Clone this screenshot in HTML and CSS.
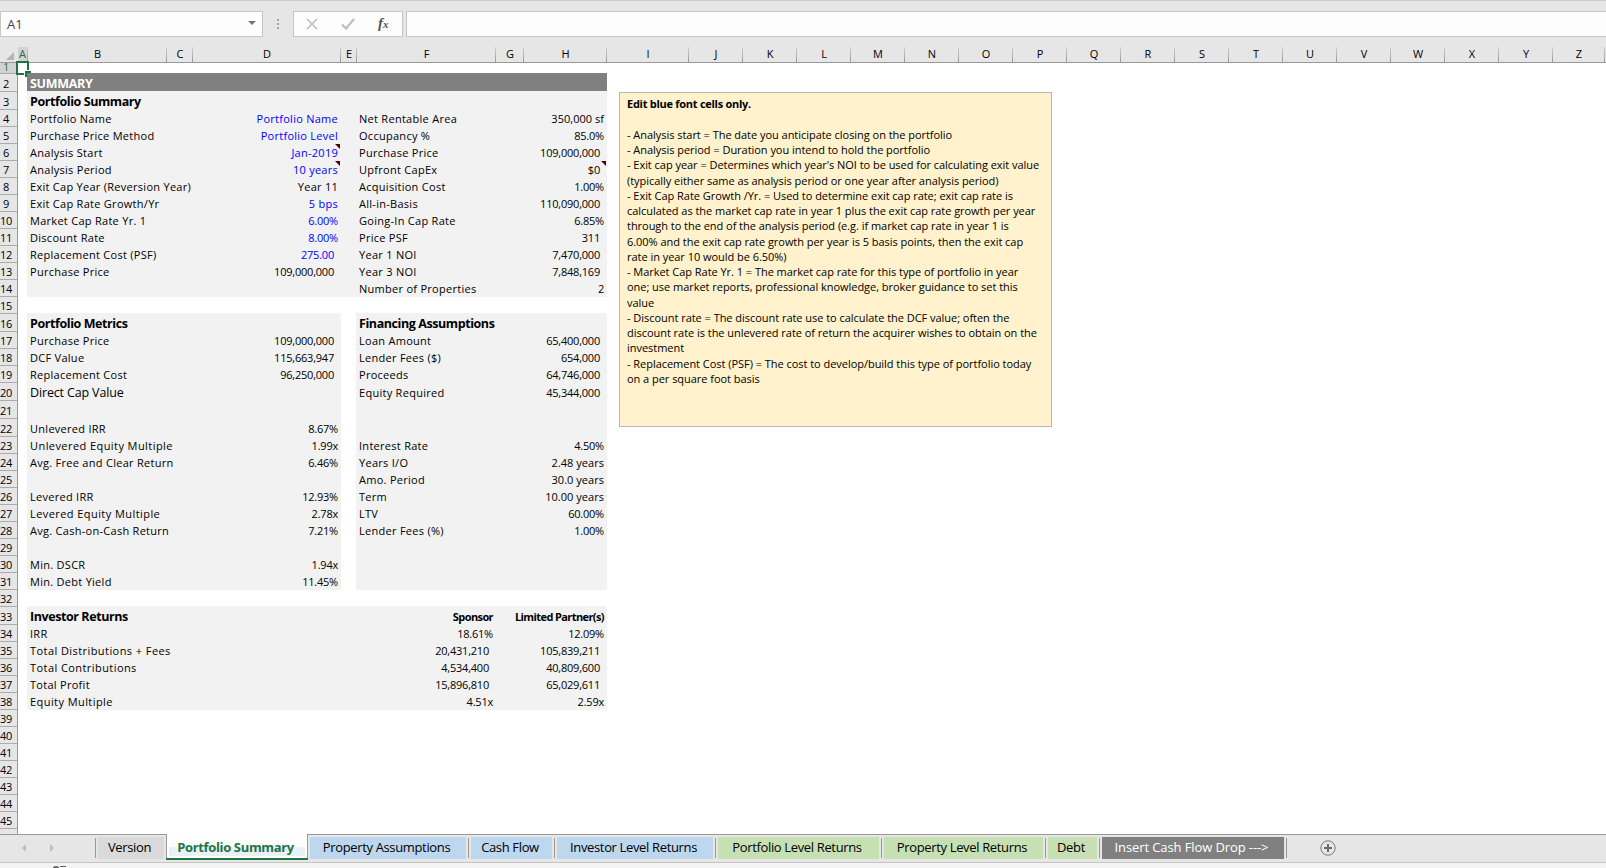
FILE: index.html
```
<!DOCTYPE html>
<html lang="en">
	<head>
		<meta charset="UTF-8" />
		<meta name="viewport" content="width=device-width, initial-scale=1.0" />
		<title>Portfolio Summary</title>
		<link rel="stylesheet" href="styles.css">
	</head>

	<body>
		<header class="formula-bar">
			<div class="name-box">
				<span>A1</span>
				<svg width="8" height="4" viewBox="0 0 8 4"><path d="M0 0h8L4 4z" fill="#777" /></svg>
			</div>
			<svg class="grip" width="3" height="11" viewBox="0 0 3 11"><path d="M0 0h2v2H0zM0 4h2v2H0zM0 8h2v2H0z" fill="#a6a6a6" /></svg>
			<div class="actions">
				<svg width="12" height="12" viewBox="0 0 12 12"><path d="M1 1l10 10M11 1L1 11" stroke="#bdbdbd" stroke-width="1.6" fill="none" /></svg>
				<svg width="14" height="12" viewBox="0 0 14 12"><path d="M1 6.5l4 4L13 1" stroke="#bdbdbd" stroke-width="2.2" fill="none" /></svg>
				<span class="fx">f<small>x</small></span>
			</div>
			<div class="formula"></div>
		</header>

		<main class="sheet">
			<table>
				<colgroup>
					<col class="c-num"><col class="c-a"><col class="c-b"><col class="c-c"><col class="c-d"><col class="c-e"><col class="c-f"><col class="c-g"><col class="c-h"><col class="c-i">
					<col span="16" class="c-std"><col class="c-z"><col>
				</colgroup>
				<thead>
					<tr>
						<th class="corner"><svg width="8" height="8" viewBox="0 0 8 8"><path d="M8 0v8H0z" fill="#b4b4b4" /></svg></th>
						<th class="active">A</th><th>B</th><th>C</th><th>D</th><th>E</th><th>F</th><th>G</th><th>H</th><th>I</th>
						<th>J</th><th>K</th><th>L</th><th>M</th><th>N</th><th>O</th><th>P</th><th>Q</th><th>R</th>
						<th>S</th><th>T</th><th>U</th><th>V</th><th>W</th><th>X</th><th>Y</th><th>Z</th><th></th>
					</tr>
				</thead>
				<tbody>
					<tr class="first"><th class="active"><div>1</div></th><td><div class="cursor"></div></td></tr>
					<tr class="tall"><th>2</th><td></td><td class="banner" colspan="7">SUMMARY</td></tr>

					<tr class="tall"><th>3</th><td></td><td class="fill title" colspan="7">Portfolio Summary</td></tr>
					<tr><th>4</th><td></td><td class="fill" colspan="2">Portfolio Name</td><td class="fill val input text">Portfolio Name</td><td class="fill"></td><td class="fill" colspan="2">Net Rentable Area</td><td class="fill val unit">350,000 sf</td></tr>
					<tr><th>5</th><td></td><td class="fill" colspan="2">Purchase Price Method</td><td class="fill val input text">Portfolio Level</td><td class="fill"></td><td class="fill" colspan="2">Occupancy %</td><td class="fill val">85.0%</td></tr>
					<tr><th>6</th><td></td><td class="fill" colspan="2">Analysis Start</td><td class="fill val input note text">Jan-2019</td><td class="fill"></td><td class="fill" colspan="2">Purchase Price</td><td class="fill val acct">109,000,000</td></tr>
					<tr><th>7</th><td></td><td class="fill" colspan="2">Analysis Period</td><td class="fill val input note text">10 years</td><td class="fill"></td><td class="fill" colspan="2">Upfront CapEx</td><td class="fill val acct note">$0</td></tr>
					<tr><th>8</th><td></td><td class="fill" colspan="2">Exit Cap Year (Reversion Year)</td><td class="fill val text">Year 11</td><td class="fill"></td><td class="fill" colspan="2">Acquisition Cost</td><td class="fill val">1.00%</td></tr>
					<tr><th>9</th><td></td><td class="fill" colspan="2">Exit Cap Rate Growth/Yr</td><td class="fill val input text">5 bps</td><td class="fill"></td><td class="fill" colspan="2">All-in-Basis</td><td class="fill val acct">110,090,000</td></tr>
					<tr><th>10</th><td></td><td class="fill" colspan="2">Market Cap Rate Yr. 1</td><td class="fill val input">6.00%</td><td class="fill"></td><td class="fill" colspan="2">Going-In Cap Rate</td><td class="fill val">6.85%</td></tr>
					<tr><th>11</th><td></td><td class="fill" colspan="2">Discount Rate</td><td class="fill val input">8.00%</td><td class="fill"></td><td class="fill" colspan="2">Price PSF</td><td class="fill val acct">311</td></tr>
					<tr><th>12</th><td></td><td class="fill" colspan="2">Replacement Cost (PSF)</td><td class="fill val acct input">275.00</td><td class="fill"></td><td class="fill" colspan="2">Year 1 NOI</td><td class="fill val acct">7,470,000</td></tr>
					<tr><th>13</th><td></td><td class="fill" colspan="2">Purchase Price</td><td class="fill val acct">109,000,000</td><td class="fill"></td><td class="fill" colspan="2">Year 3 NOI</td><td class="fill val acct">7,848,169</td></tr>
					<tr><th>14</th><td></td><td class="fill" colspan="2"></td><td class="fill"></td><td class="fill"></td><td class="fill" colspan="2">Number of Properties</td><td class="fill val">2</td></tr>
					<tr><th>15</th></tr>

					<tr class="tall"><th>16</th><td></td><td class="fill title" colspan="3">Portfolio Metrics</td><td></td><td class="fill title" colspan="3">Financing Assumptions</td></tr>
					<tr><th>17</th><td></td><td class="fill" colspan="2">Purchase Price</td><td class="fill val acct">109,000,000</td><td></td><td class="fill" colspan="2">Loan Amount</td><td class="fill val acct">65,400,000</td></tr>
					<tr><th>18</th><td></td><td class="fill" colspan="2">DCF Value</td><td class="fill val acct">115,663,947</td><td></td><td class="fill" colspan="2">Lender Fees ($)</td><td class="fill val acct">654,000</td></tr>
					<tr><th>19</th><td></td><td class="fill" colspan="2">Replacement Cost</td><td class="fill val acct">96,250,000</td><td></td><td class="fill" colspan="2">Proceeds</td><td class="fill val acct">64,746,000</td></tr>
					<tr class="tall"><th>20</th><td></td><td class="fill large" colspan="3">Direct Cap Value</td><td></td><td class="fill" colspan="2">Equity Required</td><td class="fill val acct">45,344,000</td></tr>
					<tr class="tall"><th>21</th><td></td><td class="fill" colspan="3"></td><td></td><td class="fill" colspan="3"></td></tr>
					<tr class="tall"><th>22</th><td></td><td class="fill" colspan="2">Unlevered IRR</td><td class="fill val">8.67%</td><td></td><td class="fill" colspan="3"></td></tr>
					<tr><th>23</th><td></td><td class="fill wide" colspan="2">Unlevered Equity Multiple</td><td class="fill val">1.99x</td><td></td><td class="fill" colspan="2">Interest Rate</td><td class="fill val">4.50%</td></tr>
					<tr><th>24</th><td></td><td class="fill" colspan="2">Avg. Free and Clear Return</td><td class="fill val">6.46%</td><td></td><td class="fill" colspan="2">Years I/O</td><td class="fill val unit">2.48 years</td></tr>
					<tr><th>25</th><td></td><td class="fill" colspan="3"></td><td></td><td class="fill" colspan="2">Amo. Period</td><td class="fill val unit">30.0 years</td></tr>
					<tr><th>26</th><td></td><td class="fill" colspan="2">Levered IRR</td><td class="fill val">12.93%</td><td></td><td class="fill" colspan="2">Term</td><td class="fill val unit">10.00 years</td></tr>
					<tr><th>27</th><td></td><td class="fill wide" colspan="2">Levered Equity Multiple</td><td class="fill val">2.78x</td><td></td><td class="fill" colspan="2">LTV</td><td class="fill val">60.00%</td></tr>
					<tr><th>28</th><td></td><td class="fill" colspan="2">Avg. Cash-on-Cash Return</td><td class="fill val">7.21%</td><td></td><td class="fill" colspan="2">Lender Fees (%)</td><td class="fill val">1.00%</td></tr>
					<tr><th>29</th><td></td><td class="fill" colspan="3"></td><td></td><td class="fill" colspan="3"></td></tr>
					<tr><th>30</th><td></td><td class="fill" colspan="2">Min. DSCR</td><td class="fill val">1.94x</td><td></td><td class="fill" colspan="3"></td></tr>
					<tr><th>31</th><td></td><td class="fill" colspan="2">Min. Debt Yield</td><td class="fill val">11.45%</td><td></td><td class="fill" colspan="3"></td></tr>
					<tr><th>32</th></tr>

					<tr class="tall"><th>33</th><td></td><td class="fill title" colspan="4">Investor Returns</td><td class="fill val head">Sponsor</td><td class="fill val head" colspan="2">Limited Partner(s)</td></tr>
					<tr><th>34</th><td></td><td class="fill" colspan="4">IRR</td><td class="fill val">18.61%</td><td class="fill"></td><td class="fill val">12.09%</td></tr>
					<tr><th>35</th><td></td><td class="fill wide" colspan="4">Total Distributions + Fees</td><td class="fill val acct">20,431,210</td><td class="fill"></td><td class="fill val acct">105,839,211</td></tr>
					<tr><th>36</th><td></td><td class="fill wide" colspan="4">Total Contributions</td><td class="fill val acct">4,534,400</td><td class="fill"></td><td class="fill val acct">40,809,600</td></tr>
					<tr><th>37</th><td></td><td class="fill" colspan="4">Total Profit</td><td class="fill val acct">15,896,810</td><td class="fill"></td><td class="fill val acct">65,029,611</td></tr>
					<tr><th>38</th><td></td><td class="fill wide" colspan="4">Equity Multiple</td><td class="fill val">4.51x</td><td class="fill"></td><td class="fill val">2.59x</td></tr>
					<tr><th>39</th></tr>
					<tr><th>40</th></tr>
					<tr><th>41</th></tr>
					<tr><th>42</th></tr>
					<tr><th>43</th></tr>
					<tr><th>44</th></tr>
					<tr><th>45</th></tr>
					<tr><th></th></tr>
				</tbody>
			</table>

			<!-- text box floating over the cells -->
			<aside class="text-box">
				<p><b>Edit blue font cells only.</b></p>
				<p>
					- Analysis start = The date you anticipate closing on the portfolio<br>
					- Analysis period = Duration you intend to hold the portfolio<br>
					- Exit cap year = Determines which year's NOI to be used for calculating exit value<br>
					(typically either same as analysis period or one year after analysis period)<br>
					- Exit Cap Rate Growth /Yr. = Used to determine exit cap rate; exit cap rate is<br>
					calculated as the market cap rate in year 1 plus the exit cap rate growth per year<br>
					through to the end of the analysis period (e.g. if market cap rate in year 1 is<br>
					6.00% and the exit cap rate growth per year is 5 basis points, then the exit cap<br>
					rate in year 10 would be 6.50%)<br>
					- Market Cap Rate Yr. 1 = The market cap rate for this type of portfolio in year<br>
					one; use market reports, professional knowledge, broker guidance to set this<br>
					value<br>
					- Discount rate = The discount rate use to calculate the DCF value; often the<br>
					discount rate is the unlevered rate of return the acquirer wishes to obtain on the<br>
					investment<br>
					- Replacement Cost (PSF) = The cost to develop/build this type of portfolio today<br>
					on a per square foot basis
				</p>
			</aside>
		</main>

		<nav class="tabs">
			<div class="arrows">
				<svg width="4" height="8" viewBox="0 0 4 8"><path d="M4 0v8L0 4z" fill="#bcbcbc" /></svg>
				<svg width="4" height="8" viewBox="0 0 4 8"><path d="M0 0v8l4-4z" fill="#bcbcbc" /></svg>
			</div>
			<a class="tab version">Version</a>
			<a class="tab current">Portfolio Summary</a>
			<a class="tab blue property">Property Assumptions</a>
			<a class="tab blue cash">Cash Flow</a>
			<a class="tab blue investor">Investor Level Returns</a>
			<a class="tab green portfolio-level">Portfolio Level Returns</a>
			<a class="tab green property-level">Property Level Returns</a>
			<a class="tab green debt">Debt</a>
			<a class="tab dark">Insert Cash Flow Drop ---&gt;</a>
			<svg class="add" width="16" height="16" viewBox="0 0 16 16"><circle cx="8" cy="8" r="7.2" fill="none" stroke="#7a7a7a" /><path d="M8 4v8M4 8h8" stroke="#6a6a6a" stroke-width="2" /></svg>
		</nav>
		<footer class="status">
			<svg width="14" height="2" viewBox="0 0 14 2"><path d="M0 2a3 2 0 0 1 6 0zM7 0h6v1H7z" fill="#666" /></svg>
		</footer>
	</body>
</html>
```
FILE: styles.css
```
:root {
	--chrome:   #e6e6e6;
	--line:     #ababab;
	--edge:     #999;
	--fill:     #f2f2f2;
	--excel:    #217346;
	--input:    #0000ff;
}

* {
	box-sizing: border-box;
}

body {
	margin: 0;
	height: 868px;
	display: flex;
	flex-direction: column;
	overflow: hidden;
	background: white;
	color: black;
	font-family: "Open Sans", "Noto Sans", sans-serif;
	font-size: 11px;
}
svg {
	display: block;
}

/* formula bar */
.formula-bar {
	height: 47px;
	flex-shrink: 0;
	display: flex;
	align-items: flex-start;
	padding-top: 10px;
	background: var(--chrome);
	border-top: 1px solid #cfcfcf;
}
.name-box, .actions, .formula {
	height: 26px;
	display: flex;
	align-items: center;
	background: #fdfdfd;
	border: 1px solid #c6c6c6;
}
.name-box {
	width: 263px;
	justify-content: space-between;
	padding: 0 6px 0 6px;
	color: #444;
	font-size: 13px;
}
.name-box svg {
	margin-bottom: 2px;
}
.grip {
	margin: 8px 13px 0 14px;
}
.actions {
	width: 110px;
	margin-right: 3px;
	padding-left: 12px;
	gap: 23px;
}
.fx {
	color: #555;
	font: italic bold 15px/20px "Liberation Serif", serif;
	margin-bottom: 2px;
}
.fx small {
	font-size: 11px;
}
.formula {
	flex-grow: 1;
	border-right: none;
}

/* grid */
.sheet {
	position: relative;
	height: 787px;
	flex-shrink: 0;
	overflow: hidden;
}
table {
	width: 1606px;
	table-layout: fixed;
	border-collapse: separate;
	border-spacing: 0;
}
.c-num { width: 18px; }
.c-a   { width: 9px; }
.c-b   { width: 139px; }
.c-c   { width: 26px; }
.c-d   { width: 148px; }
.c-e   { width: 16px; }
.c-f   { width: 139px; }
.c-g   { width: 28px; }
.c-h   { width: 83px; }
.c-i   { width: 82px; }
.c-std { width: 54px; }
.c-z   { width: 52px; }

th, td {
	padding: 0;
	white-space: nowrap;
	font-weight: normal;
}
thead th {
	height: 16px;
	line-height: 12px;
	padding: 0 0 2px 2px;
	background: linear-gradient(#cfcfcf, var(--edge)) left / 1px 100% no-repeat var(--chrome);
	border-bottom: 1px solid var(--edge);
}
thead th.corner {
	padding: 0;
	background: var(--chrome);
}
.corner svg {
	margin: 3px 0 0 6px;
}
thead th.active {
	padding-left: 0;
	background: #d2d2d2;
	color: var(--excel);
}
tbody tr {
	height: 17px;
}
tbody tr.tall {
	height: 18px;
}
tbody tr.first {
	height: 10px;
}
tbody th {
	background: var(--chrome);
	border-top: 1px solid var(--line);
	border-right: 1px solid var(--edge);
	padding-right: 5px;
	line-height: 15px;
	vertical-align: bottom;
	letter-spacing: -.3px;
}
tbody .first th {
	border-top: none;
	background: #d2d2d2;
	color: var(--excel);
}
.first th div {
	height: 10px;
	line-height: 8px;
}
td {
	position: relative;
	line-height: 14px;
	vertical-align: bottom;
	padding-left: 3px;
	letter-spacing: .28px;
}
.first td {
	line-height: 0;
	padding: 0;
}
/* fills spill one pixel over the gridlines below and to the right */
.fill {
	background: var(--fill);
	box-shadow: 1px 1px 0 var(--fill);
}
.banner {
	background: #808080;
	box-shadow: 1px 0 0 #808080;
	color: white;
	font-size: 12.5px;
	font-weight: bold;
	letter-spacing: -.3px;
}
.title {
	font-size: 12.5px;
	font-weight: bold;
	letter-spacing: -.42px;
}
.large {
	font-size: 12.5px;
	letter-spacing: -.15px;
}
.wide {
	letter-spacing: .43px;
}
.val {
	text-align: right;
	padding-right: 2px;
	letter-spacing: -.22px;
}
.val.acct {
	padding-right: 6px;
}
.val.text {
	letter-spacing: .26px;
}
.val.unit {
	letter-spacing: .03px;
}
.val.head {
	font-weight: bold;
	letter-spacing: -.6px;
}
.input {
	color: var(--input);
}
.note::after {
	content: "";
	position: absolute;
	top: 1px;
	right: 0;
	border-top: 5px solid #4c0000;
	border-left: 5px solid transparent;
}
.cursor {
	position: absolute;
	top: -2px;
	left: -2px;
	width: 13px;
	height: 14px;
	border: 2px solid var(--excel);
}
.cursor::after {
	content: "";
	position: absolute;
	right: -4px;
	bottom: -4px;
	width: 6px;
	height: 6px;
	background: var(--excel);
	border: solid white;
	border-width: 1px 0 0 1px;
}

.text-box {
	position: absolute;
	left: 619px;
	top: 45px;
	width: 433px;
	height: 335px;
	padding: 3px 7px;
	background: #fff2cc;
	border: 1px solid #b8b8b8;
	line-height: 15.25px;
	letter-spacing: -.035px;
	white-space: nowrap;
}
.text-box p {
	margin: 0 0 15.5px 0;
}
.text-box b {
	letter-spacing: -.27px;
}

/* sheet tabs */
.tabs {
	height: 29px;
	flex-shrink: 0;
	display: flex;
	padding-top: 2px;
	background: var(--chrome);
	border-top: 1px solid var(--edge);
	border-bottom: 1px solid #c6c6c6;
}
.arrows {
	width: 98px;
	display: flex;
	gap: 24px;
	padding: 7px 0 0 22px;
}
.tab {
	position: relative;
	height: 22px;
	margin-right: 5px;
	padding-right: 3px;
	line-height: 20px;
	text-align: center;
	font-size: 13px;
	letter-spacing: -.35px;
	white-space: nowrap;
}
.tab::after, .version::before {
	content: "";
	position: absolute;
	top: 1px;
	right: -3px;
	width: 1px;
	height: 20px;
	background: var(--edge);
}
.version::before {
	left: -3px;
}
.tab.version {
	width: 66px;
	margin-right: 2px;
	background: #d9dad9;
}
.version::after {
	display: none;
}
.tab.current {
	width: 142px;
	height: 26px;
	margin: -3px 2px 0 0;
	padding-top: 3px;
	background: linear-gradient(#fbfdfc 50%, #e9f1f6 50%) center 5px / 136px 17px no-repeat white;
	border: solid var(--edge);
	border-width: 0 1px;
	color: var(--excel);
	font-weight: bold;
}
.tab.current::after {
	top: auto;
	left: -1px;
	right: -1px;
	bottom: 0;
	width: auto;
	height: 2px;
	background: var(--excel);
}
.blue { background: #bdd7ee; }
.green { background: #c6e0b4; }
.property { width: 156px; }
.cash { width: 81px; }
.investor { width: 156px; }
.portfolio-level { width: 161px; }
.property-level { width: 159px; }
.debt { width: 49px; }
.tab.dark {
	width: 182px;
	background: #808080;
	color: white;
	letter-spacing: -.1px;
}
.add {
	margin: 3px 0 0 31px;
}

.status {
	height: 5px;
	flex-shrink: 0;
	padding: 3px 0 0 53px;
	background: #f3f3f3;
}
```
